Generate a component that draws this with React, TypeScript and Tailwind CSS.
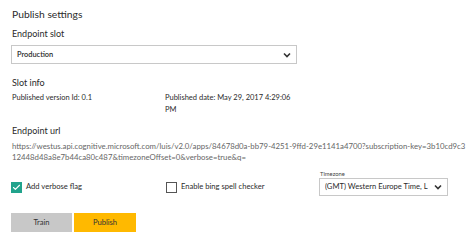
import { Check } from 'lucide-react';

function Chevron() {
  return (
    <svg width="8" height="6" viewBox="0 0 8 6" className="shrink-0">
      <polyline points="1,1.5 4,4.5 7,1.5" fill="none" stroke="#333" strokeWidth="1.6" />
    </svg>
  );
}

export default function App() {
  return (
    <div
      className="w-[474px] h-[241px] bg-white px-[11px] pt-[6px] text-[#2b2b2b] overflow-hidden"
      style={{ fontFamily: 'Lato, "Noto Sans", sans-serif' }}
    >
      <div className="text-[10.3px] leading-[16px] pl-[1px]">Publish settings</div>
      <div className="mt-[4px] text-[9px] leading-[16px] pl-[1px]">Endpoint slot</div>
      <div className="mt-[3px] w-[286px] h-[19px] border border-[#c8c8c8] flex items-center justify-between pl-[5px] pr-[5px]">
        <span className="text-[7.4px] font-semibold">Production</span>
        <Chevron />
      </div>

      <div className="mt-[11px] text-[9px] leading-[16px] pl-[1px]">Slot info</div>
      <div className="mt-[1px] flex text-[7.5px] leading-[12px] pl-[1px]">
        <div className="w-[153px]">Published version Id: 0.1</div>
        <div className="whitespace-nowrap">
          Published date: May 29, 2017 4:29:06
          <br />
          PM
        </div>
      </div>

      <div className="mt-[7px] text-[9px] leading-[16px] pl-[1px]">Endpoint url</div>
      <div className="mt-[2px] text-[7.8px] leading-[11px] text-[#666] pl-[1px] whitespace-nowrap">
        <div>
          https://westus.api.cognitive.microsoft.com/luis/v2.0/apps/84678d0a-bb79-4251-9ffd-29e1141a4700?subscription-key=3b10cd9c3
        </div>
        <div>12448d48a8e7b44ca80c487&amp;timezoneOffset=0&amp;verbose=true&amp;q=</div>
      </div>

      <div className="mt-[6px] flex items-end">
        <div className="w-[155px] h-[18px] flex items-center gap-[4px]">
          <span className="w-[11px] h-[11px] bg-[#21a38c] flex items-center justify-center">
            <Check size={9} color="#fff" strokeWidth={3} />
          </span>
          <span className="text-[7.6px]">Add verbose flag</span>
        </div>
        <div className="w-[153px] h-[18px] flex items-center gap-[4px]">
          <span className="w-[11px] h-[11px] border border-[#555] bg-white" />
          <span className="text-[7.6px]">Enable bing spell checker</span>
        </div>
        <div className="flex flex-col">
          <div className="text-[5.8px] leading-[9px] pl-[1px] text-[#444]">Timezone</div>
          <div className="w-[129px] h-[18px] border border-[#c8c8c8] flex items-center justify-between pl-[5px] pr-[5px]">
            <span className="text-[7.6px] whitespace-nowrap overflow-hidden">(GMT) Western Europe Time, L</span>
            <Chevron />
          </div>
        </div>
      </div>

      <div className="mt-[17px] flex gap-[2px]">
        <button className="w-[61px] h-[19px] bg-[#c8c8c8] text-[7.6px] text-[#333]">Train</button>
        <button className="w-[62px] h-[19px] bg-[#ffb900] text-[7.6px] text-[#333]">Publish</button>
      </div>
    </div>
  );
}
